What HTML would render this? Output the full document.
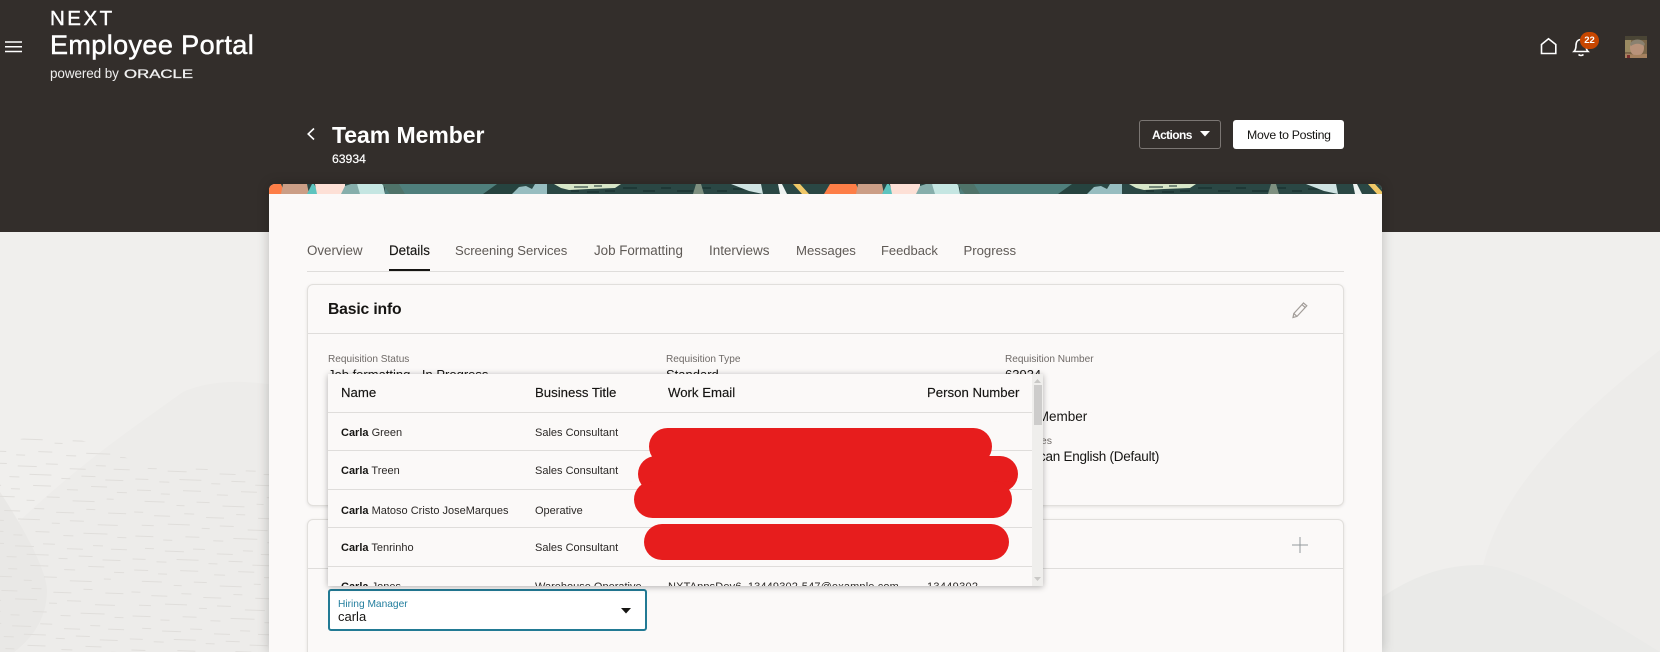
<!DOCTYPE html>
<html lang="en"><head><meta charset="utf-8"><title>Team Member</title>
<style>
html,body{margin:0;padding:0;width:1660px;height:652px;overflow:hidden;background:#f0efed;font-family:"Liberation Sans",sans-serif;color:#161513}
*{box-sizing:border-box}
#page{position:relative;width:1660px;height:652px;overflow:hidden}
.a,.t{position:absolute}
.t{white-space:nowrap;height:20px;line-height:20px}
.tab{font-size:13.4px;color:#5f5a56;letter-spacing:-.03px}
.lab{font-size:10.1px;color:#6f6a67}
.val{font-size:13px;color:#161513}
.th{font-size:13.2px;color:#161513;-webkit-text-stroke:.15px #161513}
.td{font-size:11px;color:#2b2826}
.td b{font-weight:bold;color:#161513}
.line{position:absolute;height:1px;background:#dfdddb}
.sheet{position:absolute;background:#fbf9f8;border:1px solid #e1dfdc;border-radius:6px;box-shadow:0 1px 3px rgba(0,0,0,.1)}
.blob{position:absolute;background:#e71d1d;border-radius:19px}
</style></head><body>
<div id="page">

<svg class="a" style="left:0;top:0" width="1660" height="652" viewBox="0 0 1660 652">
<defs>
<pattern id="d" width="150" height="80" patternUnits="userSpaceOnUse" patternTransform="rotate(2)">
<g stroke="#e0dedb" stroke-width="1">
<path d="M4 5h14M28 8h9M50 4h18M84 7h11M108 3h16M134 8h10M12 16h20M44 19h8M64 15h13M90 18h22M124 15h7M2 27h9M22 30h16M52 27h10M74 30h18M104 26h9M126 29h18M10 40h12M36 38h22M70 41h8M88 38h14M116 41h20M4 51h18M32 54h9M54 50h14M82 53h10M102 50h24M136 53h9M14 63h9M34 65h19M62 62h12M86 66h16M112 62h10M130 65h16M2 74h13M26 76h10M46 73h22M78 76h9M98 73h14M122 76h18"/>
</g>
</pattern>
<pattern id="b" x="-20" y="0" width="575" height="20" patternUnits="userSpaceOnUse">
<rect width="575" height="20" fill="#2a4744"/>
<polygon points="0,10 6,0 32,0 36,10" fill="#fd7e47"/>
<polygon points="32,10 34,0 58,0 60,10" fill="#cb9e86"/>
<polygon points="58,10 63,0 65,0 70,10" fill="#5dc4bf"/>
<polygon points="68,10 66,0 96,0 96,10" fill="#fde0d6"/>
<polygon points="92,10 96,2 102,0 108,0 113,10" fill="#86aeab"/>
<polygon points="111,10 108,0 134,0 136,10" fill="#c5e6e2"/>
<rect x="136" width="118" height="10" fill="#4f7f7c"/>
<polygon points="133,0 150,0 156,10 141,10" fill="#4f7369"/>
<polygon points="234,10 248,0 272,0 268,10" fill="#26433f"/>
<polygon points="263,10 270,3 277,2 283,5 286,0 298,0 298,10" fill="#97bdc0"/>
<polygon points="305,0 372,0 366,4 340,5 320,6 312,4" fill="#d7e6c8"/>
<path d="M322 7h8M338 8h12M356 7h10M374 4h14M394 7h12M412 4h10M428 7h16M450 4h12M468 7h10M484 5h12M325 3h14M345 2h8" stroke="#122a28" stroke-width="1"/>
<polygon points="444,10 447,0 452,0 455,10" fill="#7e9080"/>
<polygon points="482,0 512,0 514,10 500,7" fill="#cfe3e2"/>
<polygon points="531,10 529,0 533,0 538,10" fill="#eef3f1"/>
<polygon points="544,0 551,0 560,10 553,10" fill="#f0c868"/>
</pattern>
</defs>
<path d="M0 540C70 470 130 430 183 392C215 378 250 382 269 384V652H0Z" fill="#edecea"/>
<path d="M0 492C25 530 46 570 47 590C47 620 30 640 14 652H0Z" fill="#e9e8e6"/>
<path d="M0 442L60 433L110 450L135 462H269V652H0Z" fill="url(#d)"/>
<path d="M1660 350C1570 420 1490 500 1480 583C1481 610 1495 640 1507 652H1660Z" fill="#edecea"/>
<path d="M1382 597C1420 572 1450 565 1480 565C1520 565 1600 615 1660 652H1382Z" fill="#eaeae8"/>
</svg>

<header class="a" style="left:0;top:0;width:1660px;height:232px;background:#332e2b"></header>

<!-- top bar -->
<svg class="a" style="left:5px;top:40px" width="17" height="13"><path d="M0 2h17M0 6.700h17M0 11.500h17" stroke="#fff" stroke-width="1.500"/></svg>
<div class="t" style="left:50px;top:8px;font-size:20.500px;letter-spacing:2.500px;color:#fff;height:22px;line-height:22px;-webkit-text-stroke:.4px #fff">NEXT</div>
<div class="t" style="left:50px;top:31px;font-size:27px;letter-spacing:.4px;color:#fff;height:28px;line-height:28px;-webkit-text-stroke:.5px #fff">Employee Portal</div>
<div class="t" style="left:50px;top:64px;font-size:13.500px;color:#eeeeee;letter-spacing:-.1px">powered by</div>
<div class="t" style="left:124px;top:64px;font-size:12px;color:#f0f0f0;-webkit-text-stroke:.3px #f0f0f0;transform:scaleX(1.400);transform-origin:0 50%">ORACLE</div>

<svg class="a" style="left:1536px;top:34px" width="60" height="26" fill="none" stroke="#fff" stroke-width="1.600">
<path d="M5.500 19.500V10.500L12.500 4.800L19.800 10.500V19.500Z"/>
<path d="M38 17.500C39.500 16 40 14.500 40 11.500C40 7.500 42 5.500 45 5.500C48 5.500 50 7.500 50 11.500C50 14.500 50.500 16 52 17.500Z"/>
<path d="M42.500 20.500C44 21.800 46 21.800 47.500 20.500"/>
</svg>
<div class="a" style="left:1580px;top:32px;width:19px;height:17px;border-radius:9px;background:#c74600;color:#fff;font-size:9.500px;font-weight:bold;text-align:center;line-height:17px">22</div>
<svg class="a" style="left:1625px;top:36px" width="22" height="22">
<rect width="22" height="22" fill="#7a6548"/>
<rect width="22" height="4" fill="#4a4535"/>
<rect y="4" width="6" height="12" fill="#9a8a62"/>
<ellipse cx="12" cy="12" rx="7" ry="8" fill="#b8927a"/>
<path d="M5 8C8 2 17 2 20 8L19 10C15 7 10 7 6 10Z" fill="#8a8170"/>
<path d="M0 22V18C4 17 8 19 12 19C16 19 19 17 22 18V22Z" fill="#a5815f"/>
<rect x="2" y="19" width="3" height="3" fill="#7a2e2e"/>
</svg>

<!-- page title -->
<svg class="a" style="left:306px;top:127px" width="10" height="14" fill="none" stroke="#fff" stroke-width="1.600"><path d="M8 1.500L2.200 7L8 12.500"/></svg>
<h1 class="t" style="margin:0;left:332px;top:124px;font-size:23px;font-weight:bold;color:#fff;height:22px;line-height:22px;letter-spacing:-.05px">Team Member</h1>
<div class="t" style="left:332px;top:149px;font-size:12.200px;color:#fff;-webkit-text-stroke:.2px #fff">63934</div>
<div class="a" style="left:1139px;top:120px;width:82px;height:29px;border:1px solid #7b7673;border-radius:3px"></div>
<div class="t" style="left:1152px;top:125px;font-size:12px;color:#fff;font-weight:bold;letter-spacing:-.6px">Actions</div>
<svg class="a" style="left:1200px;top:131px" width="10" height="6"><path d="M0 0H10L5 5.500Z" fill="#fff"/></svg>
<div class="a" style="left:1233px;top:120px;width:111px;height:29px;background:#fff;border-radius:3px"></div>
<div class="t" style="left:1247px;top:125px;font-size:12.300px;color:#161513;letter-spacing:-.3px">Move to Posting</div>

<!-- main card -->
<main class="a" style="left:269px;top:184px;width:1113px;height:468px;background:#fbf9f8;border-radius:6px 6px 0 0;box-shadow:0 0 12px rgba(0,0,0,.22);overflow:hidden">
<svg class="a" style="left:0;top:0" width="1113" height="10"><rect x="0" y="0" width="1113" height="10" fill="url(#b)"/></svg>
</main>

<!-- tabs -->
<div class="t tab" style="left:307px;top:241px">Overview</div>
<div class="t tab" style="left:389px;top:241px;color:#161513;letter-spacing:0;-webkit-text-stroke:.15px #161513">Details</div>
<div class="t tab" style="left:455px;top:241px;font-size:13.100px">Screening Services</div>
<div class="t tab" style="left:594px;top:241px;font-size:13.400px">Job Formatting</div>
<div class="t tab" style="left:709px;top:241px;font-size:13.500px">Interviews</div>
<div class="t tab" style="left:796px;top:241px;font-size:13.200px">Messages</div>
<div class="t tab" style="left:881px;top:241px;font-size:13px">Feedback</div>
<div class="t tab" style="left:963.500px;top:241px;font-size:13.200px">Progress</div>
<div class="line" style="left:307px;top:271px;width:1037px"></div>
<div class="a" style="left:389px;top:269px;width:41px;height:2px;background:#161513"></div>

<!-- basic info card -->
<section class="sheet" style="left:307px;top:284px;width:1037px;height:222px"></section>
<div class="t" style="left:328px;top:300px;font-size:15.700px;font-weight:bold;letter-spacing:-.15px;height:20px;color:#161513">Basic info</div>
<div class="line" style="left:308px;top:333px;width:1035px"></div>
<svg class="a" style="left:1291px;top:301px" width="18" height="18" fill="none" stroke="#a39e9a" stroke-width="1.200"><path d="M2 16.500L2.800 12.500L12.500 2L15.800 4.800L6 15.400Z"/><path d="M11 3.700L14.300 6.500M2.800 12.500L6 15.400"/></svg>

<div class="t lab" style="left:328px;top:350px">Requisition Status</div>
<div class="t val" style="left:328px;top:365px">Job formatting - In Progress</div>
<div class="t lab" style="left:666px;top:350px">Requisition Type</div>
<div class="t val" style="left:666px;top:365px">Standard</div>
<div class="t lab" style="left:1005px;top:350px">Requisition Number</div>
<div class="t val" style="left:1005px;top:365px">63934</div>
<div class="t val" style="left:1001px;top:407px;font-size:13.500px">Team Member</div>
<div class="t lab" style="left:1000px;top:431px;font-size:10.500px">Languages</div>
<div class="t val" style="left:1005px;top:447px;font-size:13.500px;letter-spacing:-.25px">American English (Default)</div>

<!-- second card -->
<section class="sheet" style="left:307px;top:519px;width:1037px;height:160px"></section>
<div class="line" style="left:308px;top:568px;width:1035px"></div>
<svg class="a" style="left:1292px;top:537px" width="16" height="16" stroke="#93999c" stroke-width="1"><path d="M0 8h16M8 0v16"/></svg>

<!-- hiring manager -->
<div class="a" style="left:328px;top:589px;width:319px;height:42px;background:#fff;border:2px solid #227a94;border-radius:3px"></div>
<div class="t" style="left:338px;top:595px;font-size:10.200px;color:#227e9e">Hiring Manager</div>
<div class="t" style="left:338px;top:607px;font-size:13px;color:#161513">carla</div>
<svg class="a" style="left:621px;top:608px" width="10" height="6"><path d="M0 0H10L5 5.500Z" fill="#161513"/></svg>

<!-- dropdown -->
<div class="a" style="left:328px;top:374px;width:715px;height:212px;background:#fbf9f8;box-shadow:0 1px 6px rgba(0,0,0,.3);overflow:hidden">
<div class="t th" style="left:13px;top:8.500px">Name</div>
<div class="t th" style="left:207px;top:8.500px">Business Title</div>
<div class="t th" style="left:340px;top:8.500px">Work Email</div>
<div class="t th" style="left:599px;top:8.500px">Person Number</div>
<div class="line" style="left:0;top:38px;width:704px"></div>
<div class="t td" style="left:13px;top:49px"><b>Carla</b> Green</div>
<div class="t td" style="left:207px;top:49px">Sales Consultant</div>
<div class="line" style="left:0;top:76px;width:704px"></div>
<div class="t td" style="left:13px;top:87px"><b>Carla</b> Treen</div>
<div class="t td" style="left:207px;top:87px">Sales Consultant</div>
<div class="line" style="left:0;top:115px;width:704px"></div>
<div class="t td" style="left:13px;top:127px"><b>Carla</b> Matoso Cristo JoseMarques</div>
<div class="t td" style="left:207px;top:127px">Operative</div>
<div class="line" style="left:0;top:153px;width:704px"></div>
<div class="t td" style="left:13px;top:164px"><b>Carla</b> Tenrinho</div>
<div class="t td" style="left:207px;top:164px">Sales Consultant</div>
<div class="line" style="left:0;top:192px;width:704px"></div>
<div class="t td" style="left:13px;top:203px"><b>Carla</b> Jones</div>
<div class="t td" style="left:207px;top:203px">Warehouse Operative</div>
<div class="t td" style="left:340px;top:203px;letter-spacing:.15px">NXTAppsDev6_13449302-547@example.com</div>
<div class="t td" style="left:599px;top:203px;letter-spacing:.3px">13449302</div>
<div class="a" style="left:704px;top:0;width:11px;height:212px;background:#efeeec"></div>
<div class="a" style="left:705.500px;top:11px;width:8px;height:40px;background:#cdcccb"></div>
<svg class="a" style="left:705px;top:3px" width="9" height="206" fill="#c9c8c6"><path d="M1 6L4.500 2L8 6ZM1 200L4.500 204L8 200Z"/></svg>
</div>

<!-- redaction -->
<div class="blob" style="left:649px;top:428px;width:343px;height:37px"></div>
<div class="blob" style="left:638px;top:456px;width:380px;height:36px"></div>
<div class="blob" style="left:634px;top:481px;width:378px;height:37px"></div>
<div class="blob" style="left:644px;top:524px;width:365px;height:36px"></div>

</div>
</body></html>
